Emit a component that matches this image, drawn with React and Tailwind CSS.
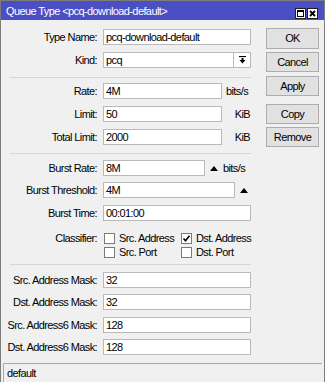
import React from 'react';

const Field = ({ value, className = 'w-[148px]' }) => (
  <div className={`h-[16px] bg-white border border-[#b9b9b9] flex items-center pl-[2px] leading-none ${className}`}>
    {value}
  </div>
);

const Row = ({ label, className = '', children }) => (
  <div className={`flex items-center h-[16px] ${className}`}>
    <div className="w-[100px] pr-[4px] text-right shrink-0 leading-none">{label}</div>
    <div className="ml-[2px] flex items-center">{children}</div>
  </div>
);

const Sep = ({ className = '' }) => (
  <div className={`h-px ml-[9px] w-[241px] bg-[#d5d5d5] ${className}`} />
);

const Up = () => (
  <svg width="8" height="5" viewBox="0 0 8 5" className="block">
    <path d="M0 5 L4 0 L8 5 Z" fill="#000" />
  </svg>
);

const Check = ({ checked, label }) => (
  <div className="flex items-center w-[77px]">
    <div className="w-[11px] h-[11px] bg-white border border-[#7a7a7a] flex items-center justify-center shrink-0">
      {checked && (
        <svg width="9" height="9" viewBox="0 0 9 9">
          <path d="M1.5 4.5 L3.5 6.8 L7.5 1.8" stroke="#000" strokeWidth="1.6" fill="none" />
        </svg>
      )}
    </div>
    <span className="ml-[4px] leading-none">{label}</span>
  </div>
);

const Btn = ({ children, className = '' }) => (
  <div className={`w-[53px] h-[20px] bg-[#e1e1e1] border border-[#adadad] flex items-center justify-center leading-none ${className}`}>
    {children}
  </div>
);

export default function App() {
  return (
    <div className="w-[327px] h-[382px] bg-white font-['Liberation_Sans',Arial,sans-serif] text-[11px] tracking-[-0.6px] text-black">
      <div className="w-[325px] h-[382px] bg-[#f0f0f0] border-x border-t border-[#7c7c7c] flex flex-col">
        {/* title bar */}
        <div className="h-[19px] bg-[#4a4fc4] flex items-end justify-between pl-[5px] pr-[6px] shrink-0">
          <span className="text-white text-[11px] leading-none pb-[3px]">Queue Type &lt;pcq-download-default&gt;</span>
          <div className="flex gap-[1px] pb-[1px]">
            <div className="w-[11px] h-[11px] bg-white border border-[#202020] flex items-center justify-center">
              <div className="w-[7px] h-[7px] border border-black border-t-2" />
            </div>
            <div className="w-[11px] h-[11px] bg-white border border-[#202020] flex items-center justify-center">
              <svg width="7" height="7" viewBox="0 0 7 7">
                <path d="M1 1 L6 6 M6 1 L1 6" stroke="#000" strokeWidth="1.8" />
              </svg>
            </div>
          </div>
        </div>

        <div className="flex flex-1">
          {/* form */}
          <div className="w-[250px] flex flex-col">
            <Row label="Type Name:" className="mt-[9px]">
              <Field value="pcq-download-default" />
            </Row>
            <Row label="Kind:" className="mt-[7px]">
              <Field value="pcq" className="w-[131px]" />
              <div className="w-[17px] h-[16px] bg-white border border-[#b9b9b9] border-l-0 flex items-center justify-center">
                <svg width="7" height="8" viewBox="0 0 7 8">
                  <path d="M0 0.5 H7" stroke="#000" strokeWidth="1.2" />
                  <path d="M2.5 2 H4.5 V4 H6.5 L3.5 7.5 L0.5 4 H2.5 Z" fill="#000" />
                </svg>
              </div>
            </Row>
            <Sep className="mt-[9px]" />
            <Row label="Rate:" className="mt-[5px]">
              <Field value="4M" className="w-[119px]" />
              <span className="ml-[4px] leading-none">bits/s</span>
            </Row>
            <Row label="Limit:" className="mt-[7px]">
              <Field value="50" className="w-[119px]" />
              <span className="w-[28px] text-right leading-none">KiB</span>
            </Row>
            <Row label="Total Limit:" className="mt-[7px]">
              <Field value="2000" className="w-[119px]" />
              <span className="w-[28px] text-right leading-none">KiB</span>
            </Row>
            <Sep className="mt-[8px]" />
            <Row label="Burst Rate:" className="mt-[6px]">
              <Field value="8M" className="w-[102px]" />
              <span className="ml-[5px]"><Up /></span>
              <span className="ml-[5px] leading-none">bits/s</span>
            </Row>
            <Row label="Burst Threshold:" className="mt-[6px]">
              <Field value="4M" className="w-[132px]" />
              <span className="ml-[5px]"><Up /></span>
            </Row>
            <Row label="Burst Time:" className="mt-[7px]">
              <Field value="00:01:00" />
            </Row>
            <div className="flex mt-[10px]">
              <div className="w-[100px] pr-[4px] text-right shrink-0 h-[14px] flex items-center justify-end leading-none">Classifier:</div>
              <div className="ml-[3px] flex flex-col">
                <div className="flex h-[14px] items-center">
                  <Check label="Src. Address" />
                  <Check label="Dst. Address" checked />
                </div>
                <div className="flex h-[14px] items-center">
                  <Check label="Src. Port" />
                  <Check label="Dst. Port" />
                </div>
              </div>
            </div>
            <Sep className="mt-[5px]" />
            <Row label="Src. Address Mask:" className="mt-[7px]">
              <Field value="32" />
            </Row>
            <Row label="Dst. Address Mask:" className="mt-[6px]">
              <Field value="32" />
            </Row>
            <Row label="Src. Address6 Mask:" className="mt-[7px]">
              <Field value="128" />
            </Row>
            <Row label="Dst. Address6 Mask:" className="mt-[6px]">
              <Field value="128" />
            </Row>
          </div>

          {/* buttons */}
          <div className="ml-[15px] flex flex-col">
            <Btn className="mt-[8px] h-[21px] border-[#6d6d6d]">OK</Btn>
            <Btn className="mt-[3px]">Cancel</Btn>
            <Btn className="mt-[4px]">Apply</Btn>
            <Btn className="mt-[8px]">Copy</Btn>
            <Btn className="mt-[3px]">Remove</Btn>
          </div>
        </div>

        {/* status bar */}
        <div className="mx-[2px] h-[19px] border-t border-l border-[#a8a8a8] flex items-center pl-[3px] leading-none shrink-0">
          default
        </div>
      </div>
    </div>
  );
}
